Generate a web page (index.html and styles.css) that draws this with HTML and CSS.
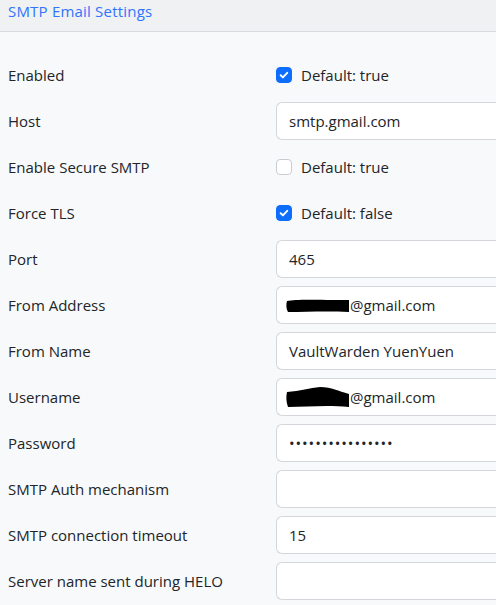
FILE: index.html
```html
<!DOCTYPE html>
<html lang="en">
<head>
<meta charset="utf-8">
<title>SMTP Email Settings</title>
<link rel="stylesheet" href="styles.css">
</head>
<body>
<header class="card-header">
  <span class="card-title">SMTP Email Settings</span>
</header>
<main class="settings">
  <div class="setting">
    <span class="setting-name">Enabled</span>
    <div class="form-check">
      <span class="check is-checked"><svg viewBox="0 0 16 16" width="16" height="16"><path d="M4.2 8.3l2.5 2.4 5-5.2" fill="none" stroke="#fff" stroke-width="2.2" stroke-linecap="round" stroke-linejoin="round"/></svg></span>
      <span class="check-label">Default: true</span>
    </div>
  </div>
  <div class="setting">
    <span class="setting-name">Host</span>
    <div class="form-control">smtp.gmail.com</div>
  </div>
  <div class="setting">
    <span class="setting-name">Enable Secure SMTP</span>
    <div class="form-check">
      <span class="check"></span>
      <span class="check-label">Default: true</span>
    </div>
  </div>
  <div class="setting">
    <span class="setting-name">Force TLS</span>
    <div class="form-check">
      <span class="check is-checked"><svg viewBox="0 0 16 16" width="16" height="16"><path d="M4.2 8.3l2.5 2.4 5-5.2" fill="none" stroke="#fff" stroke-width="2.2" stroke-linecap="round" stroke-linejoin="round"/></svg></span>
      <span class="check-label">Default: false</span>
    </div>
  </div>
  <div class="setting">
    <span class="setting-name">Port</span>
    <div class="form-control">465</div>
  </div>
  <div class="setting">
    <span class="setting-name">From Address</span>
    <div class="form-control"><svg class="redact" viewBox="0 0 64 16" width="64" height="16"><path d="M1 4 C10 2 30 3 63 3 L63 15 C40 14 20 15 2 15 C0 12 0 7 1 4 Z" fill="#000"/></svg>@gmail.com</div>
  </div>
  <div class="setting">
    <span class="setting-name">From Name</span>
    <div class="form-control">VaultWarden YuenYuen</div>
  </div>
  <div class="setting">
    <span class="setting-name">Username</span>
    <div class="form-control"><svg class="redact" viewBox="0 0 64 22" width="64" height="22"><path d="M1 6 C14 5 24 2 34 1 C46 1 52 5 63 8 L63 21 C40 19 20 21 2 21 C0 16 0 10 1 6 Z" fill="#000"/></svg>@gmail.com</div>
  </div>
  <div class="setting">
    <span class="setting-name">Password</span>
    <div class="form-control password">&bull;&bull;&bull;&bull;&bull;&bull;&bull;&bull;&bull;&bull;&bull;&bull;&bull;&bull;&bull;&bull;</div>
  </div>
  <div class="setting">
    <span class="setting-name">SMTP Auth mechanism</span>
    <div class="form-control"></div>
  </div>
  <div class="setting">
    <span class="setting-name">SMTP connection timeout</span>
    <div class="form-control">15</div>
  </div>
  <div class="setting">
    <span class="setting-name">Server name sent during HELO</span>
    <div class="form-control"></div>
  </div>
</main>
</body>
</html>
```

FILE: styles.css
```css
html, body {
  margin: 0;
  padding: 0;
  overflow: hidden;
}

body {
  background: #f8f9fa;
  color: #212529;
  font-family: "Segoe UI", "Open Sans", "Noto Sans", sans-serif;
  font-size: 15px;
}

.card-header {
  background: #f0f1f3;
  border-bottom: 1px solid #d9dbde;
  height: 32px;
  box-sizing: border-box;
  padding: 0 8px;
  line-height: 23px;
}

.card-title {
  color: #2f74fd;
  font-size: 15px;
  letter-spacing: 0.2px;
}

/* two columns: label, control; the control column reaches the right edge */
.settings {
  display: grid;
  grid-template-columns: 268px 1fr;
  row-gap: 8px;
  padding: 24px 0 0 8px;
}

.setting {
  display: contents;
}

.setting-name {
  display: flex;
  align-items: center;
  height: 38px;
}

.form-check {
  display: flex;
  align-items: center;
  gap: 9px;
  height: 38px;
}

.check {
  width: 16px;
  height: 16px;
  box-sizing: border-box;
  border: 1px solid #c8ccd1;
  border-radius: 4px;
  background: #fff;
  display: flex;
  align-items: center;
  justify-content: center;
}

.check.is-checked {
  background: #0d6efd;
  border-color: #0d6efd;
}

.check svg {
  display: block;
}

.check-label {
  line-height: 24px;
}

.form-control {
  height: 38px;
  box-sizing: border-box;
  border: 1px solid #d3d7dc;
  border-right: 0;
  border-radius: 6px 0 0 6px;
  background: #fff;
  padding: 0 12px;
  display: flex;
  align-items: center;
  white-space: nowrap;
  overflow: hidden;
}

.form-control.password {
  letter-spacing: 0.9px;
}

.redact {
  display: block;
  flex: none;
  margin-left: -3px;
}
```
